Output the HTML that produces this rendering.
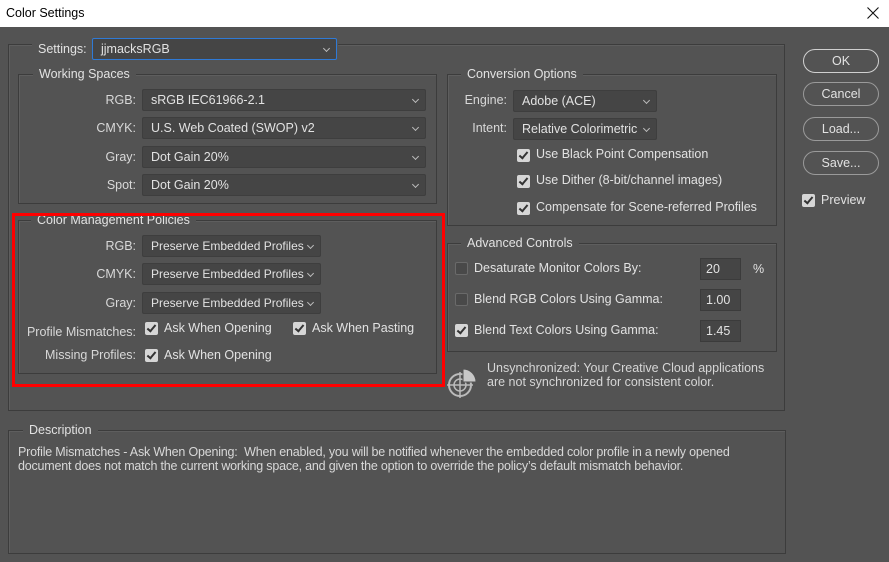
<!DOCTYPE html>
<html><head><meta charset="utf-8"><style>
*{margin:0;padding:0;box-sizing:border-box}
body{width:889px;height:562px;background:#535353;font-family:"Liberation Sans",sans-serif;font-size:12px;color:#e2e2e2;position:relative;overflow:hidden}
.a{position:absolute;white-space:nowrap}
.title{left:0;top:0;width:889px;height:27px;background:#fff;color:#000;font-size:12.5px;padding:6px 0 0 6px}
.fr{position:absolute;border:1px solid #3c3c3c;box-shadow:1px 1px 0 #5e5e5e inset}
.lg{position:absolute;background:#535353;padding:0 6px;top:-9px;line-height:16px;font-size:12.5px}
.dd{position:absolute;background:#454545;border:1px solid #3e3e3e;border-radius:2px;height:22px;line-height:20px;padding-left:8px;font-size:12.5px;overflow:hidden}
.dd:after{content:"";position:absolute;right:7px;top:7px;width:4px;height:4px;border-right:1px solid #bbb;border-bottom:1px solid #bbb;transform:rotate(45deg)}
.dd.s{font-size:12px;padding-left:8px}
.lb{position:absolute;text-align:right;font-size:12.5px;color:#d8d8d8}
.cb{position:absolute;width:13px;height:13px;background:#d6d6d6;border-radius:2px}
.cb.on:after{content:"";position:absolute;left:4px;top:1px;width:3px;height:7px;border-right:2px solid #333;border-bottom:2px solid #333;transform:rotate(40deg)}
.cb.off{background:#494949;border:1px solid #6a6a6a}
.t{position:absolute;font-size:12.5px;white-space:nowrap}
.in{position:absolute;width:41px;height:22px;background:#454545;border:1px solid #3b3b3b;padding-left:5px;line-height:20px;font-size:12.5px}
.bt{position:absolute;left:803px;width:76px;height:24px;border:1px solid #9a9a9a;border-radius:12px;text-align:center;line-height:22px;font-size:12.5px}
</style></head><body>
<div class="a title">Color Settings</div>
<svg class="a" style="left:867px;top:7px" width="12" height="12" viewBox="0 0 12 12"><path d="M0.5 0.5L11.5 11.5M11.5 0.5L0.5 11.5" stroke="#111" stroke-width="1.1"/></svg>

<div class="fr" style="left:8px;top:44px;width:777px;height:367px"></div>
<div class="a" style="left:32px;top:36px;width:306px;height:26px;background:#535353"></div>
<div class="t" style="left:38px;top:42px">Settings:</div>
<div class="dd" style="left:92px;top:38px;width:245px;border:1px solid #2f7ad6;height:22px">jjmacksRGB</div>

<div class="fr" style="left:18px;top:74px;width:419px;height:130px"><div class="lg" style="left:14px">Working Spaces</div></div>
<div class="lb" style="left:60px;width:76px;top:93px">RGB:</div>
<div class="lb" style="left:60px;width:76px;top:121px">CMYK:</div>
<div class="lb" style="left:60px;width:76px;top:150px">Gray:</div>
<div class="lb" style="left:60px;width:76px;top:178px">Spot:</div>
<div class="dd" style="left:142px;top:89px;width:284px">sRGB IEC61966-2.1</div>
<div class="dd" style="left:142px;top:117px;width:284px">U.S. Web Coated (SWOP) v2</div>
<div class="dd" style="left:142px;top:146px;width:284px">Dot Gain 20%</div>
<div class="dd" style="left:142px;top:174px;width:284px">Dot Gain 20%</div>

<div class="fr" style="left:18px;top:220px;width:419px;height:154px"><div class="lg" style="left:12px">Color Management Policies</div></div>
<div class="a" style="left:12px;top:213px;width:433px;height:174px;border:3px solid #f00"></div>
<div class="lb" style="left:40px;width:96px;top:239px">RGB:</div>
<div class="lb" style="left:40px;width:96px;top:267px">CMYK:</div>
<div class="lb" style="left:40px;width:96px;top:296px">Gray:</div>
<div class="dd s" style="left:142px;top:235px;width:179px">Preserve Embedded Profiles</div>
<div class="dd s" style="left:142px;top:263px;width:179px">Preserve Embedded Profiles</div>
<div class="dd s" style="left:142px;top:292px;width:179px">Preserve Embedded Profiles</div>
<div class="lb" style="left:10px;width:126px;top:325px">Profile Mismatches:</div>
<div class="lb" style="left:10px;width:126px;top:348px">Missing Profiles:</div>
<div class="cb on" style="left:145px;top:322px"></div><div class="t" style="left:164px;top:321px">Ask When Opening</div>
<div class="cb on" style="left:293px;top:322px"></div><div class="t" style="left:312px;top:321px">Ask When Pasting</div>
<div class="cb on" style="left:145px;top:349px"></div><div class="t" style="left:164px;top:348px">Ask When Opening</div>

<div class="fr" style="left:447px;top:74px;width:330px;height:152px"><div class="lg" style="left:13px">Conversion Options</div></div>
<div class="lb" style="left:450px;width:57px;top:93px">Engine:</div>
<div class="lb" style="left:450px;width:57px;top:121px">Intent:</div>
<div class="dd" style="left:513px;top:90px;width:144px">Adobe (ACE)</div>
<div class="dd" style="left:513px;top:118px;width:144px">Relative Colorimetric</div>
<div class="cb on" style="left:517px;top:149px"></div><div class="t" style="left:536px;top:147px">Use Black Point Compensation</div>
<div class="cb on" style="left:517px;top:175px"></div><div class="t" style="left:536px;top:173px">Use Dither (8-bit/channel images)</div>
<div class="cb on" style="left:517px;top:202px"></div><div class="t" style="left:536px;top:200px">Compensate for Scene-referred Profiles</div>

<div class="fr" style="left:447px;top:243px;width:330px;height:109px"><div class="lg" style="left:13px">Advanced Controls</div></div>
<div class="cb off" style="left:455px;top:262px"></div><div class="t" style="left:474px;top:261px">Desaturate Monitor Colors By:</div>
<div class="cb off" style="left:455px;top:293px"></div><div class="t" style="left:474px;top:292px">Blend RGB Colors Using Gamma:</div>
<div class="cb on" style="left:455px;top:324px"></div><div class="t" style="left:474px;top:323px">Blend Text Colors Using Gamma:</div>
<div class="in" style="left:700px;top:258px">20</div><div class="t" style="left:753px;top:262px">%</div>
<div class="in" style="left:700px;top:289px">1.00</div>
<div class="in" style="left:700px;top:320px">1.45</div>

<svg class="a" style="left:444px;top:366px" width="34" height="34" viewBox="0 0 34 34">
<circle cx="16" cy="19" r="11" fill="none" stroke="#bbb" stroke-width="2"/>
<circle cx="16" cy="19" r="6" fill="none" stroke="#bbb" stroke-width="1.5"/>
<path d="M16 6V32M3 19H29" stroke="#bbb" stroke-width="1.5"/>
<path d="M19 16V3A13 13 0 0 1 32 16Z" fill="#c8c8c8" stroke="#535353" stroke-width="1"/>
</svg>
<div class="t" style="left:487px;top:361px;line-height:14px;color:#d6d6d6">Unsynchronized: Your Creative Cloud applications<br>are not synchronized for consistent color.</div>

<div class="bt" style="top:49px;border-color:#d0d0d0;border-width:1.5px">OK</div>
<div class="bt" style="top:82px">Cancel</div>
<div class="bt" style="top:117px">Load...</div>
<div class="bt" style="top:151px">Save...</div>
<div class="cb on" style="left:802px;top:194px"></div><div class="t" style="left:821px;top:193px">Preview</div>

<div class="fr" style="left:8px;top:430px;width:778px;height:124px"><div class="lg" style="left:14px">Description</div></div>
<div class="t" style="left:18px;top:445px;font-size:12.5px;line-height:14px;letter-spacing:-0.2px;color:#d8d8d8">Profile Mismatches - Ask When Opening:&nbsp; When enabled, you will be notified whenever the embedded color profile in a newly opened<br>document does not match the current working space, and given the option to override the policy’s default mismatch behavior.</div>
</body></html>
